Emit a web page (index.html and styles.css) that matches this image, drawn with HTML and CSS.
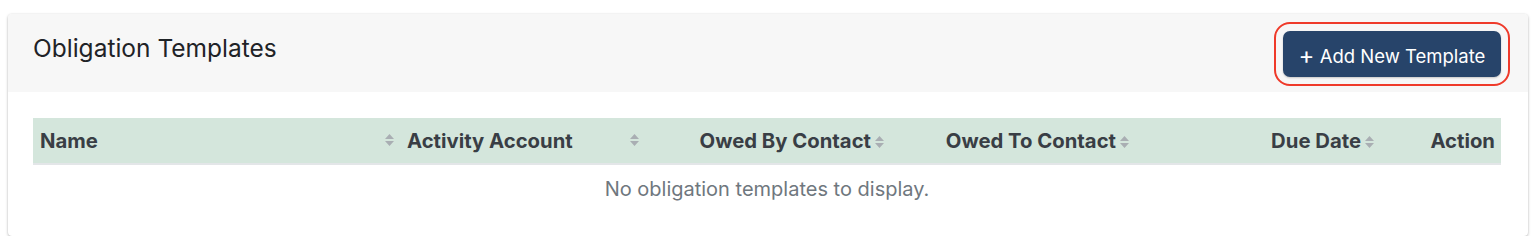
FILE: index.html
```html
<!DOCTYPE html>
<html>
<head>
<meta charset="utf-8">
<link rel="stylesheet" href="styles.css">
</head>
<body>
<div class="card">
  <div class="card-header">
    <h2 class="title">Obligation Templates</h2>
    <button class="btn-add"><span class="plus">+</span> Add New Template</button>
  </div>
  <div class="card-body">
    <table class="tbl">
      <colgroup>
        <col class="c-name"><col class="c-std"><col class="c-std"><col class="c-std"><col class="c-std"><col class="c-act">
      </colgroup>
      <thead>
        <tr>
          <th class="th-split"><span>Name</span><svg class="caret" viewBox="0 0 9 12"><path d="M4.5 0 L9 5 H0 Z M4.5 12 L9 7 H0 Z"/></svg></th>
          <th class="th-split"><span>Activity Account</span><svg class="caret" viewBox="0 0 9 12"><path d="M4.5 0 L9 5 H0 Z M4.5 12 L9 7 H0 Z"/></svg></th>
          <th class="th-right"><span>Owed By Contact</span><svg class="caret" viewBox="0 0 9 12"><path d="M4.5 0 L9 5 H0 Z M4.5 12 L9 7 H0 Z"/></svg></th>
          <th class="th-right"><span>Owed To Contact</span><svg class="caret" viewBox="0 0 9 12"><path d="M4.5 0 L9 5 H0 Z M4.5 12 L9 7 H0 Z"/></svg></th>
          <th class="th-right"><span>Due Date</span><svg class="caret" viewBox="0 0 9 12"><path d="M4.5 0 L9 5 H0 Z M4.5 12 L9 7 H0 Z"/></svg></th>
          <th class="th-right"><span>Action</span></th>
        </tr>
      </thead>
      <tbody>
        <tr><td colspan="6" class="empty">No obligation templates to display.</td></tr>
      </tbody>
    </table>
  </div>
</div>
</body>
</html>
```
FILE: styles.css
```css
html, body {
  margin: 0;
  padding: 0;
  background: #ffffff;
}
body {
  padding: 14px 8px 0 8px;
  font-family: Inter, "Noto Sans", sans-serif;
}
.card {
  background: #ffffff;
  border-radius: 4px;
  box-shadow: 0 1px 3px rgba(0,0,0,0.28), 0 0 2px rgba(0,0,0,0.06);
}
.card-header {
  background: #f7f7f7;
  border-radius: 4px 4px 0 0;
  display: flex;
  justify-content: space-between;
  align-items: flex-start;
  padding: 17px 27px 15px 25px;
}
.title {
  margin: 3px 0 0 0;
  font-size: 24.5px;
  line-height: 29px;
  font-weight: 400;
  color: #1f2327;
}
.btn-add {
  height: 46px;
  width: 218px;
  border: 0;
  border-radius: 7px;
  background: #27446a;
  color: #ffffff;
  font-family: Inter, "Noto Sans", sans-serif;
  font-size: 18.5px;
  font-weight: 400;
  padding: 0;
  outline: 2px solid #ef3a2a;
  outline-offset: 7px;
  box-shadow: 0 1px 2px rgba(0,0,0,0.2);
  white-space: nowrap;
}
.plus {
  font-size: 24px;
  font-weight: 400;
  position: relative;
  top: 1px;
}
.card-body {
  padding: 26px 27px 24px 25px;
}
.tbl {
  width: 100%;
  border-collapse: collapse;
  table-layout: fixed;
}
.c-name { width: 367px; }
.c-std { width: 245px; }
.c-act { width: 121px; }
.tbl th {
  background: #d4e6dc;
  color: #393e45;
  font-size: 20.3px;
  font-weight: 700;
  height: 45px;
  padding: 0 6px 0 7px;
  border-bottom: 2px solid #e3e6e8;
  white-space: nowrap;
  vertical-align: middle;
}
.th-split {
  text-align: left;
}
.th-split span {
  float: left;
}
.th-split .caret {
  float: right;
  margin-top: 6px;
}
.th-right {
  text-align: right;
}
.caret {
  width: 9px;
  height: 12px;
  fill: #a9aeb3;
  margin-left: 4px;
  vertical-align: 0px;
}
.empty {
  text-align: center;
  color: #6f777e;
  font-size: 20px;
  height: 47px;
  padding: 0;
  vertical-align: middle;
}
```
